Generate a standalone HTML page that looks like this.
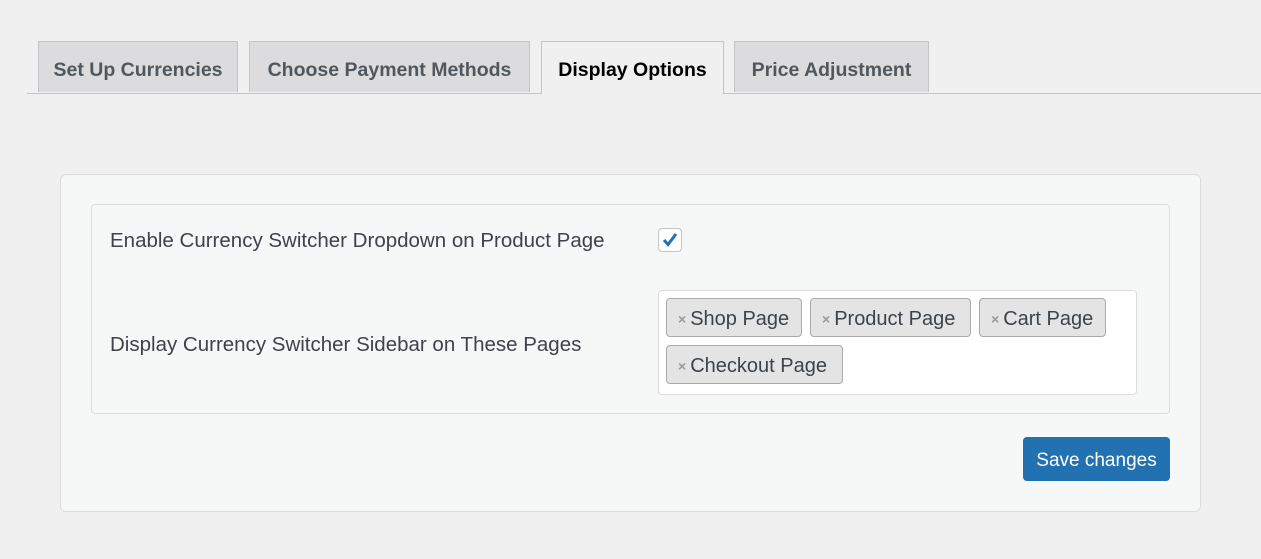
<!DOCTYPE html>
<html><head><style>
body{margin:0;width:1261px;height:559px;background:#f0f0f1;font-family:"Liberation Sans",sans-serif;position:relative;overflow:hidden;color:#3c434a}
.tab{position:absolute;top:41px;height:51px;background:#dcdcde;border:1px solid #c3c4c7;border-bottom:none;box-sizing:border-box;font-size:19.5px;font-weight:bold;color:#50575e;line-height:56px;text-align:center;white-space:nowrap}
.line{position:absolute;left:27px;right:0;top:93px;height:1px;background:#c3c4c7}
.card{position:absolute;left:60px;top:174px;width:1141px;height:338px;box-sizing:border-box;background:#f6f7f7;border:1px solid #dcdcde;border-radius:6px}
.inner{position:absolute;left:91px;top:204px;width:1079px;height:210px;box-sizing:border-box;border:1px solid #dcdcde;border-radius:4px}
.lbl{position:absolute;left:110px;font-size:20.5px;color:#3c434a}
.cb{position:absolute;left:658px;top:228px;width:24px;height:24px;box-sizing:border-box;background:#fff;border:1px solid #c3c4c7;border-radius:4px}
.sel{position:absolute;left:658px;top:290px;width:479px;height:105px;box-sizing:border-box;background:#fff;border:1px solid #dcdcde;border-radius:4px}
.tag{position:absolute;height:39px;box-sizing:border-box;background:#e4e4e4;border:1px solid #aaa;border-radius:4px;font-size:20px;line-height:40px;padding-left:11px;color:#3c434a;white-space:nowrap}
.tag b{color:#999;font-weight:bold;font-size:14px;margin-right:4px;vertical-align:1px}
.btn{position:absolute;left:1023px;top:437px;width:147px;height:44px;background:#2271b1;border-radius:4px;color:#fff;font-size:19px;line-height:48px;text-align:center}
</style></head><body>
<div class="line"></div>
<div class="tab" style="left:38px;width:200px">Set Up Currencies</div>
<div class="tab" style="left:249px;width:281px">Choose Payment Methods</div>
<div class="tab" style="left:541px;width:183px;background:#f0f0f1;color:#000;height:53px">Display Options</div>
<div class="tab" style="left:734px;width:195px">Price Adjustment</div>
<div class="card"></div>
<div class="inner"></div>
<div class="lbl" style="top:229px">Enable Currency Switcher Dropdown on Product Page</div>
<div class="cb"><svg width="22" height="22" viewBox="0 0 22 22"><path d="M5 11 L9 15.5 L17 5" stroke="#2271b1" stroke-width="3" fill="none"/></svg></div>
<div class="lbl" style="top:333px">Display Currency Switcher Sidebar on These Pages</div>
<div class="sel"></div>
<div class="tag" style="left:666px;top:298px;width:136px"><b>×</b>Shop Page</div>
<div class="tag" style="left:810px;top:298px;width:161px"><b>×</b>Product Page</div>
<div class="tag" style="left:979px;top:298px;width:127px"><b>×</b>Cart Page</div>
<div class="tag" style="left:666px;top:345px;width:177px"><b>×</b>Checkout Page</div>
<div class="btn">Save changes</div>
</body></html>
